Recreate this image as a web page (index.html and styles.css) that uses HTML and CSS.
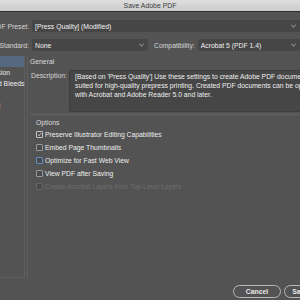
FILE: index.html
```html
<!DOCTYPE html>
<html lang="en">
<head>
    <meta charset="UTF-8">
    <title>Save Adobe PDF</title>
    <link rel="stylesheet" href="styles.css">
</head>
<body>

    <div class="dialog">
        <div class="titlebar">Save Adobe PDF</div>

        <div class="settings">
            <div class="row">
                <span class="label">Adobe PDF Preset:</span>
                <div class="select preset">
                    <span>[Press Quality] (Modified)</span>
                    <svg class="chevron" viewBox="0 0 6 4"><polyline points="0.5,0.8 3,3.2 5.5,0.8"/></svg>
                </div>
            </div>
            <div class="row">
                <span class="label">Standard:</span>
                <div class="select standard">
                    <span>None</span>
                    <svg class="chevron" viewBox="0 0 6 4"><polyline points="0.5,0.8 3,3.2 5.5,0.8"/></svg>
                </div>
                <span class="compat-label">Compatibility:</span>
                <div class="select compat">
                    <span>Acrobat 5 (PDF 1.4)</span>
                    <svg class="chevron" viewBox="0 0 6 4"><polyline points="0.5,0.8 3,3.2 5.5,0.8"/></svg>
                </div>
            </div>
        </div>

        <div class="body">
            <ul class="sidebar">
                <li class="active">General</li>
                <li>Compression</li>
                <li>Marks and Bleeds</li>
                <li>Output</li>
                <li>Advanced</li>
                <li>Security</li>
                <li>Summary</li>
            </ul>

            <div class="main">
                <div class="general">
                    <div class="heading">General</div>
                    <div class="desc-row">
                        <span class="desc-label">Description:</span>
                        <div class="desc-box">[Based on 'Press Quality'] Use these settings to create Adobe PDF documents suited for high-quality prepress printing.  Created PDF documents can be opened with Acrobat and Adobe Reader 5.0 and later.</div>
                    </div>
                </div>

                <div class="options">
                    <div class="heading">Options</div>
                    <label class="check">
                        <span class="box checked"><svg viewBox="0 0 8 8"><polyline points="1.6,4.2 3.3,5.9 6.4,2"/></svg></span>
                        Preserve Illustrator Editing Capabilities
                    </label>
                    <label class="check"><span class="box"></span>Embed Page Thumbnails</label>
                    <label class="check"><span class="box focus"></span>Optimize for Fast Web View</label>
                    <label class="check"><span class="box"></span>View PDF after Saving</label>
                    <label class="check disabled"><span class="box"></span>Create Acrobat Layers from Top-Level Layers</label>
                </div>
            </div>
        </div>

        <div class="footer">
            <button class="btn">Cancel</button>
            <button class="btn">Save PDF</button>
        </div>
    </div>

</body>
</html>
```

FILE: styles.css
```css
/* General */
body {
    margin: 0;
    background-color: #535353;
    overflow: hidden;
}

.dialog {
    width: 380px;
    height: 300px;
    margin-left: -40px; /* window is wider than the shot */
    background-color: #535353;
    font-family: 'Liberation Sans', Arial, sans-serif;
    font-size: 6.8px;
    color: #e4e4e4;
}

.titlebar {
    height: 11px;
    line-height: 11px;
    text-align: center;
    font-size: 6.9px;
    color: #3c3c3c;
    background: linear-gradient(#dedede, #cbcbcb);
    border-bottom: 1px solid #2f2f2f;
}

/* Preset rows */
.settings {
    padding-top: 8px;
}

.row {
    display: flex;
    align-items: center;
    height: 12px;
    margin-bottom: 7px;
}

.label {
    width: 69px;
    text-align: right;
    margin-right: 3px;
    color: #d6d6d6;
    white-space: nowrap;
}

.select {
    display: flex;
    align-items: center;
    justify-content: space-between;
    height: 12px;
    padding: 0 4px 0 3px;
    box-sizing: border-box;
    background-color: #464646;
    border-radius: 2px;
    color: #f0f0f0;
}

.preset {
    width: 268px;
}

.standard {
    width: 116px;
}

.compat-label {
    margin: 0 3px 0 6px;
    color: #d6d6d6;
}

.compat {
    width: 102px;
}

.chevron {
    width: 5px;
    height: 4px;
    fill: none;
    stroke: #cfcfcf;
    stroke-width: 1;
}

/* Body */
.body {
    display: flex;
    height: 223px;
    margin-top: -2px;
}

.sidebar {
    list-style: none;
    margin: 0 0 1px 4px;
    padding: 0;
    width: 59px;
    border: 1px solid #5e5e5e;
    border-top: none;
    background-color: #535353;
}

.sidebar li {
    height: 11px;
    line-height: 11px;
    padding-left: 5px;
    white-space: nowrap;
    color: #ececec;
}

.sidebar li.active {
    background-color: #56687f;
}

.main {
    flex: 1;
    margin-left: 2px;
    border-left: 1px solid #5e5e5e;
    padding-left: 2px;
}

.heading {
    height: 11px;
    line-height: 11px;
    color: #dcdcdc;
}

.general {
    height: 57px;
    border-bottom: 3px solid #5a5a5a;
}

.desc-row {
    display: flex;
    margin-top: 3px;
}

.desc-label {
    width: 38px;
    padding-left: 1px;
    line-height: 12px;
    color: #d6d6d6;
}

.desc-box {
    width: 260px;
    height: 42px;
    box-sizing: border-box;
    padding: 1px 0 0 5px;
    line-height: 9px;
    background-color: #464646;
    border: 1px solid #3d3d3d;
    color: #eeeeee;
}

/* Options */
.options {
    padding-left: 6px;
    padding-top: 2px;
}

.options .heading {
    height: 9px;
    line-height: 9px;
    margin-bottom: 1px;
}

.check {
    display: flex;
    align-items: center;
    height: 13px;
    color: #eeeeee;
    white-space: nowrap;
}

.box {
    width: 7px;
    height: 7px;
    margin-right: 2px;
    border: 1px solid #9a9a9a;
    border-radius: 1px;
    background-color: #4a4a4a;
    box-sizing: border-box;
    display: flex;
}

.box svg {
    width: 100%;
    height: 100%;
    fill: none;
    stroke: #ffffff;
    stroke-width: 1.3;
}

.box.checked {
    border-color: #c8c8c8;
}

.box.focus {
    border-color: #5f8fc8;
}

.check.disabled {
    color: #6e6e6e;
}

.check.disabled .box {
    border-color: #666;
}

/* Footer */
.footer {
    display: flex;
    justify-content: flex-end;
    gap: 3px;
    padding: 6px 8px 0 0;
}

.btn {
    width: 48px;
    height: 13px;
    padding: 0;
    border: 1px solid #b8b8b8;
    border-radius: 7px;
    background: transparent;
    font-family: 'Liberation Sans', Arial, sans-serif;
    font-size: 6.8px;
    font-weight: bold;
    color: #e8e8e8;
}
```
